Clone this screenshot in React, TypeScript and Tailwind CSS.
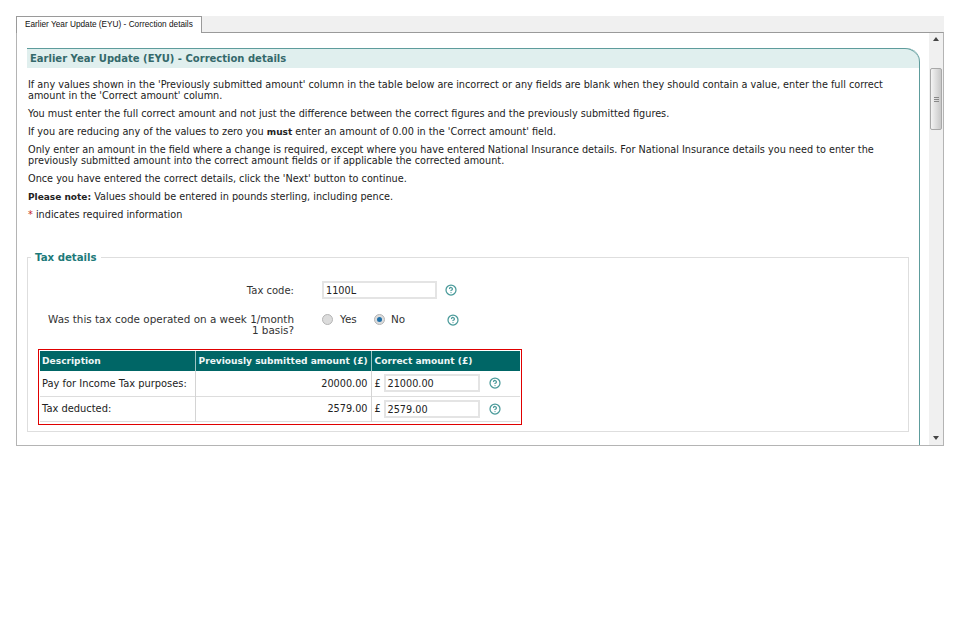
import { CircleHelp } from "lucide-react"

function Help({ className = "" }: { className?: string }) {
  return <CircleHelp size={12} strokeWidth={2.5} className={`text-[#4a9a9a] shrink-0 ${className}`} />
}

function Radio({ checked }: { checked?: boolean }) {
  return (
    <span className="w-[11px] h-[11px] rounded-full border border-[#b5b5b5] bg-[#dcdcdc] flex items-center justify-center shrink-0">
      {checked && <span className="w-[5px] h-[5px] rounded-full bg-[#1f6fa8]" />}
    </span>
  )
}

export default function App() {
  return (
    <div className="w-[960px] h-[640px] bg-white pt-4 pl-4 font-['DejaVu_Sans',sans-serif] text-[9.7px] leading-[11px] text-[#222] overflow-hidden">
      <div className="w-[928px]">
        <div className="h-4 bg-[#f0f0f0] flex">
          <div className="w-[186px] h-[17px] bg-white border border-b-0 border-[#9a9a9a] pl-2 font-['Liberation_Sans',sans-serif] text-[8.25px] leading-[15px] text-[#111] whitespace-nowrap relative z-10">
            Earlier Year Update (EYU) - Correction details
          </div>
        </div>

        <div className="h-[414px] border border-[#b4b4b4] border-t-[#9a9a9a] flex bg-white">
          <div className="flex-1 min-w-0 pl-[10px] pt-[15px] pr-[9px]">
            <div className="h-full border-r border-[#5e9c9c] rounded-tr-[14px]">
              <div className="h-5 bg-[#e0efee] border-t border-[#5e9c9c] rounded-tr-[14px] pl-[3px] font-bold text-[10px] leading-[20px] text-[#34696b]">
                Earlier Year Update (EYU) - Correction details
              </div>

              <div className="pl-[1px] pr-[30px] pt-[11px] flex flex-col gap-[7px]">
                <p>If any values shown in the 'Previously submitted amount' column in the table below are incorrect or any fields are blank when they should contain a value, enter the full correct amount in the 'Correct amount' column.</p>
                <p>You must enter the full correct amount and not just the difference between the correct figures and the previously submitted figures.</p>
                <p>If you are reducing any of the values to zero you <b className="text-[9px] leading-none">must</b> enter an amount of 0.00 in the 'Correct amount' field.</p>
                <p>Only enter an amount in the field where a change is required, except where you have entered National Insurance details. For National Insurance details you need to enter the previously submitted amount into the correct amount fields or if applicable the corrected amount.</p>
                <p>Once you have entered the correct details, click the 'Next' button to continue.</p>
                <p><b className="text-[9px] leading-none">Please note:</b> Values should be entered in pounds sterling, including pence.</p>
                <p><span className="text-[#c62828]">*</span> indicates required information</p>
              </div>

              <fieldset className="mt-[31px] w-[882px] h-[181px] border border-[#dedede] pl-[11px] pt-[17px]">
                <legend className="-ml-[8px] px-[4px] font-bold text-[10.2px] leading-[13px] text-[#1d7a7a]">Tax details</legend>

                <div className="flex items-center h-[18px]">
                  <div className="w-[255px] text-right text-[10px] text-[#333]">Tax code:</div>
                  <div className="ml-[28px] w-[115px] h-[18px] border-2 border-[#e4e4e4] pl-[2px] leading-[15px]">1100L</div>
                  <Help className="ml-[8px]" />
                </div>

                <div className="flex items-start mt-[15px] h-[28px] text-[10.4px]">
                  <div className="w-[255px] pl-[9px] text-right text-[#333]">Was this tax code operated on a week 1/month 1 basis?</div>
                  <div className="ml-[28px] flex items-center h-[11px] text-[#333]">
                    <Radio />
                    <span className="ml-[7px] w-[34px]">Yes</span>
                    <Radio checked />
                    <span className="ml-[6px] w-[56px]">No</span>
                    <Help />
                  </div>
                </div>

                <div className="mt-[7px] -ml-[1px] w-[484px] border border-[#e00000] p-[1px] h-[76px]">
                  <table className="w-[480px] table-fixed border-collapse">
                    <thead>
                      <tr className="h-[20px] bg-[#006666] text-[#eef6f6] text-[9.1px] text-left">
                        <th className="w-[155px] pl-[2px] border-r border-[#9fc4c4] font-bold whitespace-nowrap">Description</th>
                        <th className="w-[176px] pl-[3px] border-r border-[#9fc4c4] font-bold whitespace-nowrap">Previously submitted amount (£)</th>
                        <th className="pl-[3px] font-bold whitespace-nowrap">Correct amount (£)</th>
                      </tr>
                    </thead>
                    <tbody>
                      <tr className="h-[25px] border-b border-[#dddddd]">
                        <td className="pl-[2px] border-r border-[#d4d4d4] whitespace-nowrap text-[9.9px]">Pay for Income Tax purposes:</td>
                        <td className="pr-[3px] text-right border-r border-[#d4d4d4]">20000.00</td>
                        <td className="pl-[3px]">
                          <div className="flex items-center">
                            <span className="w-[9px]">£</span>
                            <div className="w-[96px] h-[18px] border-2 border-[#e4e4e4] pl-[2px] leading-[15px]">21000.00</div>
                            <Help className="ml-[9px]" />
                          </div>
                        </td>
                      </tr>
                      <tr className="h-[25px] border-b border-[#dddddd]">
                        <td className="pl-[2px] border-r border-[#d4d4d4] text-[9.9px]">Tax deducted:</td>
                        <td className="pr-[3px] text-right border-r border-[#d4d4d4]">2579.00</td>
                        <td className="pl-[3px]">
                          <div className="flex items-center">
                            <span className="w-[9px]">£</span>
                            <div className="w-[96px] h-[18px] border-2 border-[#e4e4e4] pl-[2px] leading-[15px]">2579.00</div>
                            <Help className="ml-[9px]" />
                          </div>
                        </td>
                      </tr>
                    </tbody>
                  </table>
                </div>
              </fieldset>
            </div>
          </div>

          <div className="w-[14px] bg-[#f0f0f0] flex flex-col items-center pt-[4px] pb-[5px] shrink-0">
            <span className="w-0 h-0 border-x-[3px] border-x-transparent border-b-[4px] border-b-[#444]" />
            <div className="mt-[27px] w-[12px] h-[62px] rounded-[2px] border border-[#a8a8a8] bg-gradient-to-r from-[#f4f4f4] to-[#c8c8c8] flex items-center justify-center">
              <span className="w-[5px] h-[5px] border-y border-[#888] bg-[linear-gradient(#888,#888)] bg-[length:100%_1px] bg-center bg-no-repeat" />
            </div>
            <span className="mt-auto w-0 h-0 border-x-[3px] border-x-transparent border-t-[4px] border-t-[#444]" />
          </div>
        </div>
      </div>
    </div>
  )
}
